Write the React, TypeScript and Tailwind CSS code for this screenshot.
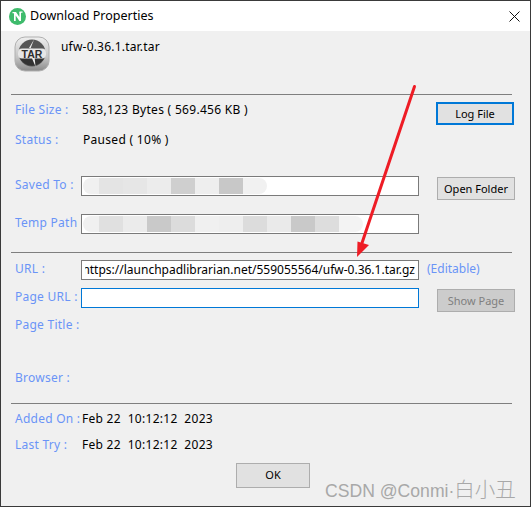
import React from "react";

const font = "font-['Noto_Sans','Liberation_Sans',sans-serif]";

function Row({ label, top, children }: { label: string; top: string; children?: React.ReactNode }) {
  return (
    <div className={`flex items-start h-[18px] shrink-0 pl-[14px] ${top}`}>
      <div className="w-[66px] shrink-0 h-[18px] leading-[20px] text-[12px] tracking-[0.25px] text-[#6a94f7] whitespace-pre">{label}</div>
      {children}
    </div>
  );
}

function Btn({ children, className }: { children: React.ReactNode; className: string }) {
  return (
    <div className={`flex items-center justify-center shrink-0 text-[11px] box-border ${className}`}>{children}</div>
  );
}

function Blur({ cells }: { cells: string[] }) {
  return (
    <div className="flex h-[16px] pl-px mt-px">
      <div className="w-[16px] h-full rounded-l-full bg-[#f0f0f0]" />
      {cells.map((c, i) => (
        <div
          key={i}
          className={`h-full w-[24px] ${i === cells.length - 1 ? "rounded-r-full" : ""}`}
          style={{ background: c }}
        />
      ))}
    </div>
  );
}

function TarIcon() {
  return (
    <svg width="36" height="36" viewBox="0 0 36 36" className="shrink-0">
      <defs>
        <linearGradient id="tg" x1="0" y1="0" x2="0" y2="1">
          <stop offset="0" stopColor="#efefef" />
          <stop offset="0.6" stopColor="#c4c4c4" />
          <stop offset="1" stopColor="#8a8a8a" />
        </linearGradient>
      </defs>
      <rect x="1" y="1" width="34" height="34" rx="10" fill="url(#tg)" stroke="#b0b0b0" />
      <circle cx="18" cy="17" r="13.5" fill="#555555" />
      <path d="M5 20a13.500 13.500 0 0 0 26 0z" fill="#333333" />
      <path d="M20 3.500l-3.500 9 2.500 0.500-1 7 2.500 0.500 1 10-4.500-10.500-2.500-0.500 2.500-7-2-0.500z" fill="#eeeeee" />
      <rect x="4" y="12.500" width="28" height="10" rx="4" fill="#e6e6e6" />
      <text x="18" y="21.500" textAnchor="middle" fontSize="10.500" fontWeight="700" fontFamily="'Liberation Sans',sans-serif" fill="#2e2e2e">TAR</text>
    </svg>
  );
}

export default function App() {
  return (
    <div className={`w-[531px] h-[507px] bg-[#3a3a3a] pt-px pl-px pr-px overflow-hidden ${font}`}>
      <div className="relative flex flex-col h-[505px] bg-[#f0f0f0] text-[12px] text-black">
        <div className="flex items-center h-[30px] bg-white pl-[8px] pr-[10px] shrink-0">
          <svg width="17" height="17" viewBox="0 0 17 17">
            <circle cx="8.500" cy="8.500" r="8.500" fill="#3fbb6c" />
            <path d="M5 4h2l3.400 5V4H12v9h-1.600L6.700 7.400V13H5z" fill="#fff" />
            <path d="M3.500 4H6v1.200H3.500zM10.500 3.500H13.500v1.200h-3z" fill="#fff" />
          </svg>
          <span className="ml-[4px] text-[12.5px]">Download Properties</span>
          <svg width="11" height="11" viewBox="0 0 11 11" className="ml-auto">
            <path d="M0.500 0.500l10 10M10.500 0.500l-10 10" stroke="#111" strokeWidth="1" fill="none" />
          </svg>
        </div>

        <div className="flex items-start h-[63px] pl-[13px] pt-[5px] shrink-0">
          <TarIcon />
          <span className="ml-[11px] mt-[2px] leading-[18px] text-[12px] tracking-[0.2px]">ufw-0.36.1.tar.tar</span>
        </div>

        <div className="h-px ml-[10px] w-[501px] bg-[#7f7f7f] shrink-0" />

        <Row label="File Size :" top="mt-[5px]">
          <span className="leading-[20px] ml-px w-[354px] shrink-0 tracking-[0.3px]">583,123 Bytes ( 569.456 KB )</span>
          <Btn className="w-[78px] h-[23px] mt-[2px] pt-px border-2 border-[#0078d7] bg-[#e1e1e1]">Log File</Btn>
        </Row>
        <Row label="Status :" top="mt-[12px]">
          <span className="leading-[20px] ml-[2px] tracking-[0.3px]">Paused ( 10% )</span>
        </Row>

        <Row label="Saved To :" top="mt-[27px]">
          <div className="w-[338px] h-[20px] mt-px shrink-0 border border-[#7a7a7a] bg-white overflow-hidden">
            <Blur cells={["#e4e4e4", "#e6e6e6", "#ececec", "#cfcfcf", "#eeeeee", "#c8c8c8", "#f1f1f1"]} />
          </div>
          <Btn className="w-[78px] h-[23px] mt-[2px] pt-px ml-[18px] border border-[#adadad] bg-[#e1e1e1]">Open Folder</Btn>
        </Row>
        <Row label="Temp Path" top="mt-[20px]">
          <div className="w-[338px] h-[20px] mt-px shrink-0 border border-[#7a7a7a] bg-white overflow-hidden">
            <Blur cells={["#e0e0e0", "#ebebeb", "#c9c9c9", "#dcdcdc", "#f0f0f0", "#eeeeee", "#dcdcdc", "#eaeaea", "#c9c9c9", "#dddddd", "#f3f3f3"]} />
          </div>
        </Row>

        <div className="h-px ml-[10px] w-[501px] bg-[#7f7f7f] mt-[21px] shrink-0" />

        <Row label="URL :" top="mt-[6px]">
          <div className="w-[338px] h-[20px] mt-px shrink-0 px-[3px] border border-[#7a7a7a] bg-white">
            <div className="flex justify-end items-center h-full overflow-hidden whitespace-nowrap">
              <span className="shrink-0">https://launchpadlibrarian.net/559055564/ufw-0.36.1.tar.gz</span>
            </div>
          </div>
          <span className="ml-[8px] leading-[20px] text-[#6a94f7]">(Editable)</span>
        </Row>
        <Row label="Page URL :" top="mt-[10px]">
          <div className="w-[338px] h-[20px] mt-px shrink-0 border border-[#0078d7] bg-white" />
          <Btn className="w-[78px] h-[23px] mt-[2px] pt-px ml-[18px] border border-[#adadad] bg-[#cccccc] text-[#7f7f7f]">Show Page</Btn>
        </Row>
        <Row label="Page Title :" top="mt-[10px]" />
        <Row label="Browser :" top="mt-[35px]" />

        <div className="h-px ml-[10px] w-[501px] bg-[#7f7f7f] mt-[17px] shrink-0" />

        <Row label="Added On :" top="mt-[5px]">
          <span className="leading-[20px] ml-px whitespace-pre tracking-[0.28px]">Feb 22  10:12:12  2023</span>
        </Row>
        <Row label="Last Try :" top="mt-[8px]">
          <span className="leading-[20px] ml-px whitespace-pre tracking-[0.28px]">Feb 22  10:12:12  2023</span>
        </Row>

        <div className="flex mt-[10px] pl-[235px] shrink-0">
          <Btn className="w-[74px] h-[25px] border border-[#adadad] bg-[#e1e1e1]">OK</Btn>
        </div>

        <span className="absolute left-[324px] top-[477px] text-[17.6px] leading-[24px] text-[#a8a8a8] whitespace-nowrap font-['Liberation_Sans','Noto_Sans_CJK_SC',sans-serif]">
          CSDN @Conmi·<span className="text-[20.5px] font-light">白小丑</span>
        </span>

        <svg className="absolute left-[340px] top-[80px]" width="90" height="185" viewBox="0 0 90 185">
          <path d="M73.500 5.500L21 162" stroke="#ee1c25" strokeWidth="3" strokeLinecap="round" fill="none" />
          <path d="M16 176L16.500 160.500L28 164z" fill="#ee1c25" />
        </svg>
      </div>
    </div>
  );
}
